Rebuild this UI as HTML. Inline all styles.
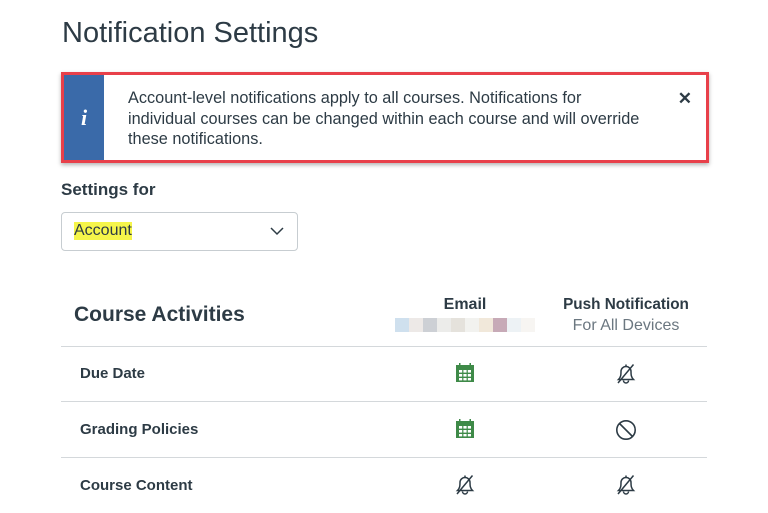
<!DOCTYPE html>
<html><head><style>
*{margin:0;padding:0;box-sizing:border-box}
body{width:768px;height:513px;background:#fff;font-family:"Liberation Sans",sans-serif;color:#2d3b45;position:relative;overflow:hidden}
.a{position:absolute}
h1{position:absolute;left:62px;top:17px;font-size:29px;font-weight:normal;color:#2d3b45}
.alert{left:61px;top:72px;width:648px;height:91px;border:3px solid #e8404a;box-shadow:0 2px 4px rgba(0,0,0,.3);background:#fff}
.strip{left:0;top:0;width:40px;height:85px;background:#3a6aa9;color:#fff;font:italic bold 22px "Liberation Serif",serif;text-align:center;line-height:85px}
.msg{left:64px;top:13px;font-size:16.3px;line-height:20.5px;color:#2d3b45;white-space:nowrap}
.x{right:14px;top:14px;font-size:17px;font-weight:bold}
.lbl{left:61px;top:180px;font-size:17px;font-weight:bold}
.sel{left:61px;top:212px;width:237px;height:39px;border:1px solid #c7cdd1;border-radius:4px}
.sel span{position:absolute;left:12px;top:9px;font-size:16px;background:#f5f54a}
.row{left:61px;width:646px;height:1px;background:#d4d8db}
.rl{left:80px;font-size:15px;font-weight:bold}
</style></head><body>
<h1>Notification Settings</h1>
<div class="a alert"><div class="a strip">i</div>
<div class="a msg">Account-level notifications apply to all courses. Notifications for<br>individual courses can be changed within each course and will override<br>these notifications.</div>
<div class="a x">✕</div></div>
<div class="a lbl">Settings for</div>
<div class="a sel"><span>Account</span>
<svg class="a" style="left:208px;top:14px" width="14" height="9" viewBox="0 0 14 9"><path d="M1 1l6 6 6-6" fill="none" stroke="#2d3b45" stroke-width="1.5"/></svg></div>
<div class="a" style="left:74px;top:303px;font-size:21px;font-weight:bold">Course Activities</div>
<div class="a" style="left:425px;top:296px;width:80px;text-align:center;font-size:16px;font-weight:bold">Email</div>
<div class="a" style="left:395px;top:318px;width:140px;height:14px;display:flex">
<i style="flex:1;background:#cfe0ee"></i><i style="flex:1;background:#ede9e7"></i><i style="flex:1;background:#cdd0d5"></i><i style="flex:1;background:#ececea"></i><i style="flex:1;background:#e5e2dc"></i><i style="flex:1;background:#f2f2ef"></i><i style="flex:1;background:#f1e8da"></i><i style="flex:1;background:#c7aab7"></i><i style="flex:1;background:#edf2f5"></i><i style="flex:1;background:#f7f5f2"></i></div>
<div class="a" style="left:546px;top:296px;width:160px;text-align:center;font-size:15.3px;font-weight:bold">Push Notification</div>
<div class="a" style="left:546px;top:317px;width:160px;text-align:center;font-size:16px;color:#6b7780">For All Devices</div>
<div class="a row" style="top:346px"></div>
<div class="a row" style="top:401px"></div>
<div class="a row" style="top:457px"></div>
<div class="a rl" style="top:365px">Due Date</div>
<div class="a rl" style="top:421px">Grading Policies</div>
<div class="a rl" style="top:477px">Course Content</div>
<svg width="0" height="0" style="position:absolute"><defs>
<g id="cal"><rect x="0" y="2" width="18" height="17" fill="#3e8a48"/><rect x="3" y="0" width="1.5" height="4" fill="#3e8a48"/><rect x="13.5" y="0" width="1.5" height="4" fill="#3e8a48"/>
<g fill="#fff"><rect x="3" y="7" width="3.2" height="2.6"/><rect x="7.4" y="7" width="3.2" height="2.6"/><rect x="11.8" y="7" width="3.2" height="2.6"/><rect x="3" y="11" width="3.2" height="2.6"/><rect x="7.4" y="11" width="3.2" height="2.6"/><rect x="11.8" y="11" width="3.2" height="2.6"/><rect x="3" y="15" width="3.2" height="2.4"/><rect x="7.4" y="15" width="3.2" height="2.4"/><rect x="11.8" y="15" width="3.2" height="2.4"/></g></g>
<g id="bell" fill="none" stroke="#2d3b45" stroke-width="1.5"><path d="M11 1.5v2M3.5 16.5c2.5-2.5 2.5-5 2.5-8a5 5 0 0 1 10 0c0 3 0 5.5 2.5 8zM8.5 17.5a2.5 2.5 0 0 0 5 0M3 20L18.5 1.5"/></g>
</defs></svg>
<svg class="a" style="left:456px;top:363px" width="18" height="20"><use href="#cal"/></svg>
<svg class="a" style="left:456px;top:419px" width="18" height="20"><use href="#cal"/></svg>
<svg class="a" style="left:615px;top:363px" width="22" height="22"><use href="#bell"/></svg>
<svg class="a" style="left:454px;top:474px" width="22" height="22"><use href="#bell"/></svg>
<svg class="a" style="left:615px;top:474px" width="22" height="22"><use href="#bell"/></svg>
<svg class="a" style="left:615px;top:419px" width="22" height="22"><circle cx="11" cy="11" r="9.2" fill="none" stroke="#2d3b45" stroke-width="1.6"/><path d="M4.5 4.5l13 13" stroke="#2d3b45" stroke-width="1.6"/></svg>
</body></html>
